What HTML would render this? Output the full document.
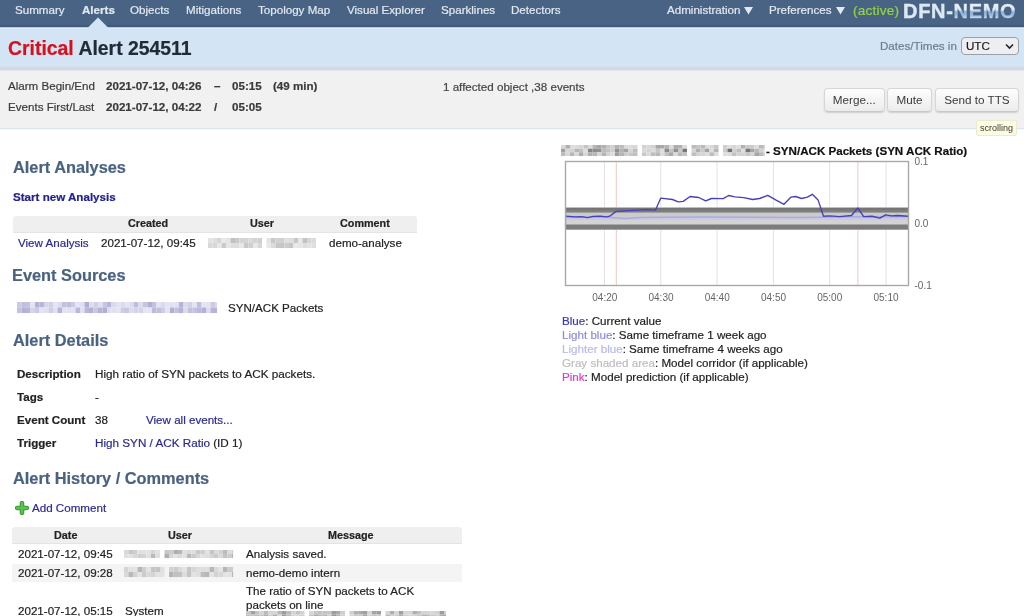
<!DOCTYPE html>
<html><head><meta charset="utf-8"><style>
html,body{margin:0;padding:0;width:1024px;height:616px;overflow:hidden;background:#fff;position:relative}
.t{position:absolute;white-space:nowrap;font-family:'Liberation Sans', sans-serif;will-change:transform;-webkit-text-stroke:0.2px currentColor}
.g{will-change:transform}
</style></head><body>
<div style="position:absolute;left:0px;top:0px;width:1024px;height:25px;background:#496385"></div>
<div style="position:absolute;left:0px;top:25px;width:1024px;height:2px;background:#425b7c"></div>
<div style="position:absolute;left:0px;top:27px;width:1024px;height:1px;background:#b8cce0"></div>
<div style="position:absolute;left:0px;top:28px;width:1024px;height:1px;background:#dbeafa"></div>
<div style="position:absolute;left:0px;top:29px;width:1024px;height:34px;background:#d3e4f4"></div>
<div style="position:absolute;left:0px;top:63px;width:1024px;height:3px;background:#d5e6f7"></div>
<div style="position:absolute;left:0px;top:66px;width:1024px;height:1px;background:#d4e1ee"></div>
<div style="position:absolute;left:0px;top:67px;width:1024px;height:3px;background:#d1d9e3"></div>
<div style="position:absolute;left:0px;top:70px;width:1024px;height:1px;background:#e4e7ea"></div>
<div style="position:absolute;left:0px;top:71px;width:1024px;height:57px;background:#f1f1f1"></div>
<div style="position:absolute;left:0px;top:128px;width:1024px;height:1px;background:#dce5ea"></div>
<div style="position:absolute;left:0px;top:129px;width:1024px;height:1px;background:#f2fbfc"></div>
<svg style="position:absolute;left:88px;top:17px" width="20" height="13"><polygon points="0,10.5 10,0.5 20,10.5 20,12 0,12" fill="#d3e4f4"/></svg>
<div class="t" style="left:15.4px;top:4.48px;font-size:11.6px;line-height:11.6px;color:#e3e9f1;font-weight:400;">Summary</div>
<div class="t" style="left:82.3px;top:4.48px;font-size:11.6px;line-height:11.6px;color:#e3e9f1;font-weight:700;">Alerts</div>
<div class="t" style="left:130.2px;top:4.48px;font-size:11.6px;line-height:11.6px;color:#e3e9f1;font-weight:400;">Objects</div>
<div class="t" style="left:185.8px;top:4.48px;font-size:11.6px;line-height:11.6px;color:#e3e9f1;font-weight:400;">Mitigations</div>
<div class="t" style="left:258.3px;top:4.48px;font-size:11.6px;line-height:11.6px;color:#e3e9f1;font-weight:400;">Topology Map</div>
<div class="t" style="left:347.2px;top:4.48px;font-size:11.6px;line-height:11.6px;color:#e3e9f1;font-weight:400;">Visual Explorer</div>
<div class="t" style="left:441px;top:4.48px;font-size:11.6px;line-height:11.6px;color:#e3e9f1;font-weight:400;">Sparklines</div>
<div class="t" style="left:510.9px;top:4.48px;font-size:11.6px;line-height:11.6px;color:#e3e9f1;font-weight:400;">Detectors</div>
<div class="t" style="left:666.6px;top:4.48px;font-size:11.6px;line-height:11.6px;color:#e3e9f1;font-weight:400;">Administration</div>
<div class="t" style="left:768.7px;top:4.48px;font-size:11.6px;line-height:11.6px;color:#e3e9f1;font-weight:400;">Preferences</div>
<svg style="position:absolute;left:744.3px;top:7px" width="9" height="8"><polygon points="0,0 9,0 4.5,7.5" fill="#e3e9f1"/></svg>
<svg style="position:absolute;left:836px;top:7px" width="9" height="8"><polygon points="0,0 9,0 4.5,7.5" fill="#e3e9f1"/></svg>
<div class="t" style="left:853.4px;top:3.79px;font-size:13.6px;line-height:13.6px;color:#95d63e;font-weight:400;letter-spacing:0.2px">(active)</div>
<div class="t" style="left:903px;top:1.27px;font-size:20px;line-height:20px;color:#dde8f5;font-weight:700;letter-spacing:0.7px;-webkit-text-stroke:0.4px currentColor">DFN-<span style="background:linear-gradient(#e8f0fa 0%,#e2ecf8 44%,#8eb1da 54%,#9dbde2 70%,#c4d8ee 82%);-webkit-background-clip:text;background-clip:text;color:transparent">NEMO</span></div>
<div class="t" style="left:8px;top:39.38px;font-size:19.4px;line-height:19.4px;color:#222a36;font-weight:700;"><span style="color:#d8101c">Critical</span> Alert 254511</div>
<div class="t" style="left:880px;top:39.98px;font-size:11.6px;line-height:11.6px;color:#6e7c8a;font-weight:400;">Dates/Times in</div>
<div style="position:absolute;left:961px;top:37px;width:58px;height:17.5px;box-sizing:border-box;border:1px solid #9aa0a8;border-radius:4px;background:#eeeef2"></div>
<div class="t" style="left:966px;top:40.18px;font-size:11.6px;line-height:11.6px;color:#1a1a1a;font-weight:400;">UTC</div>
<svg style="position:absolute;left:1005px;top:43px" width="9" height="7"><polyline points="1,1.5 4.5,5 8,1.5" fill="none" stroke="#222" stroke-width="1.6"/></svg>
<div class="t" style="left:7.8px;top:80.18px;font-size:11.6px;line-height:11.6px;color:#3a3a3a;font-weight:400;">Alarm Begin/End</div>
<div class="t" style="left:7.8px;top:101.18px;font-size:11.6px;line-height:11.6px;color:#3a3a3a;font-weight:400;">Events First/Last</div>
<div class="t" style="left:106px;top:80.18px;font-size:11.6px;line-height:11.6px;color:#3a3a3a;font-weight:700;">2021-07-12, 04:26</div>
<div class="t" style="left:213.5px;top:80.18px;font-size:11.6px;line-height:11.6px;color:#3a3a3a;font-weight:700;">–</div>
<div class="t" style="left:231.5px;top:80.18px;font-size:11.6px;line-height:11.6px;color:#3a3a3a;font-weight:700;">05:15</div>
<div class="t" style="left:273px;top:80.18px;font-size:11.6px;line-height:11.6px;color:#3a3a3a;font-weight:700;">(49 min)</div>
<div class="t" style="left:106px;top:101.18px;font-size:11.6px;line-height:11.6px;color:#3a3a3a;font-weight:700;">2021-07-12, 04:22</div>
<div class="t" style="left:213.5px;top:101.18px;font-size:11.6px;line-height:11.6px;color:#3a3a3a;font-weight:700;">/</div>
<div class="t" style="left:231.5px;top:101.18px;font-size:11.6px;line-height:11.6px;color:#3a3a3a;font-weight:700;">05:05</div>
<div class="t" style="left:443px;top:80.98px;font-size:11.6px;line-height:11.6px;color:#444;font-weight:400;">1 affected object ,38 events</div>
<div class="g" style="position:absolute;left:823.8px;top:88.3px;width:60.5px;height:24px;box-sizing:border-box;border:1px solid #d6d6d6;border-bottom-color:#c8c8c8;border-radius:4px;background:linear-gradient(#fdfdfd,#ececec);box-shadow:0 1px 1.5px rgba(0,0,0,0.14);font-family:'Liberation Sans', sans-serif;font-size:11.7px;line-height:21.5px;text-align:center;color:#3a3a3a">Merge...</div>
<div class="g" style="position:absolute;left:887.2px;top:88.3px;width:45.2px;height:24px;box-sizing:border-box;border:1px solid #d6d6d6;border-bottom-color:#c8c8c8;border-radius:4px;background:linear-gradient(#fdfdfd,#ececec);box-shadow:0 1px 1.5px rgba(0,0,0,0.14);font-family:'Liberation Sans', sans-serif;font-size:11.7px;line-height:21.5px;text-align:center;color:#3a3a3a">Mute</div>
<div class="g" style="position:absolute;left:935.3px;top:88.3px;width:83.8px;height:24px;box-sizing:border-box;border:1px solid #d6d6d6;border-bottom-color:#c8c8c8;border-radius:4px;background:linear-gradient(#fdfdfd,#ececec);box-shadow:0 1px 1.5px rgba(0,0,0,0.14);font-family:'Liberation Sans', sans-serif;font-size:11.7px;line-height:21.5px;text-align:center;color:#3a3a3a">Send to TTS</div>
<div class="g" style="position:absolute;left:975.5px;top:119.8px;width:41px;height:15.5px;box-sizing:border-box;border:1px solid #ebebd2;border-radius:2px;background:#fcfce4;font-family:'Liberation Sans', sans-serif;font-size:9px;line-height:14px;text-align:center;color:#38382e">scrolling</div>
<div class="t" style="left:12.5px;top:158.76px;font-size:16.35px;line-height:16.35px;color:#4a6282;font-weight:700;">Alert Analyses</div>
<div class="t" style="left:12.5px;top:191.18px;font-size:11.6px;line-height:11.6px;color:#22228c;font-weight:700;">Start new Analysis</div>
<div style="position:absolute;left:13px;top:216px;width:404px;height:15.5px;background:#efefef;border-radius:3px 3px 0 0;border-bottom:1px solid #e4e4e4"></div>
<div class="t" style="left:128.4px;top:218.06px;font-size:10.8px;line-height:10.8px;color:#222;font-weight:700;">Created</div>
<div class="t" style="left:250px;top:218.06px;font-size:10.8px;line-height:10.8px;color:#222;font-weight:700;">User</div>
<div class="t" style="left:340.3px;top:218.06px;font-size:10.8px;line-height:10.8px;color:#222;font-weight:700;">Comment</div>
<div class="t" style="left:18px;top:236.68px;font-size:11.6px;line-height:11.6px;color:#2a2a90;font-weight:400;">View Analysis</div>
<div class="t" style="left:101px;top:236.68px;font-size:11.6px;line-height:11.6px;color:#222;font-weight:400;">2021-07-12, 09:45</div>
<svg style="position:absolute;left:205px;top:235px" width="114" height="16"><g><rect x="3.0" y="3.0" width="4.5" height="5.05" fill="rgb(228,228,230)"/><rect x="3.0" y="8.0" width="4.5" height="5.05" fill="rgb(217,217,219)"/><rect x="7.5" y="3.0" width="4.5" height="5.05" fill="rgb(224,224,226)"/><rect x="7.5" y="8.0" width="4.5" height="5.05" fill="rgb(215,215,217)"/><rect x="12.0" y="3.0" width="4.5" height="5.05" fill="rgb(214,214,216)"/><rect x="12.0" y="8.0" width="4.5" height="5.05" fill="rgb(232,232,234)"/><rect x="16.5" y="3.0" width="4.5" height="5.05" fill="rgb(232,232,234)"/><rect x="16.5" y="8.0" width="4.5" height="5.05" fill="rgb(202,202,204)"/><rect x="21.0" y="3.0" width="4.5" height="5.05" fill="rgb(228,228,230)"/><rect x="21.0" y="8.0" width="4.5" height="5.05" fill="rgb(229,229,231)"/><rect x="25.5" y="3.0" width="4.5" height="5.05" fill="rgb(193,193,195)"/><rect x="25.5" y="8.0" width="4.5" height="5.05" fill="rgb(221,221,223)"/><rect x="30.0" y="3.0" width="4.5" height="5.05" fill="rgb(202,202,204)"/><rect x="30.0" y="8.0" width="4.5" height="5.05" fill="rgb(220,220,222)"/><rect x="34.5" y="3.0" width="4.5" height="5.05" fill="rgb(213,213,215)"/><rect x="34.5" y="8.0" width="4.5" height="5.05" fill="rgb(231,231,233)"/><rect x="39.0" y="3.0" width="4.5" height="5.05" fill="rgb(213,213,215)"/><rect x="39.0" y="8.0" width="4.5" height="5.05" fill="rgb(201,201,203)"/><rect x="43.5" y="3.0" width="4.5" height="5.05" fill="rgb(218,218,220)"/><rect x="43.5" y="8.0" width="4.5" height="5.05" fill="rgb(208,208,210)"/><rect x="48.0" y="3.0" width="4.5" height="5.05" fill="rgb(211,211,213)"/><rect x="48.0" y="8.0" width="4.5" height="5.05" fill="rgb(232,232,234)"/><rect x="52.5" y="3.0" width="4.5" height="5.05" fill="rgb(207,207,209)"/><rect x="52.5" y="8.0" width="4.5" height="5.05" fill="rgb(215,215,217)"/><rect x="61.5" y="3.0" width="4.5" height="5.05" fill="rgb(227,227,229)"/><rect x="61.5" y="8.0" width="4.5" height="5.05" fill="rgb(232,232,234)"/><rect x="66.0" y="3.0" width="4.5" height="5.05" fill="rgb(201,201,203)"/><rect x="66.0" y="8.0" width="4.5" height="5.05" fill="rgb(220,220,222)"/><rect x="70.5" y="3.0" width="4.5" height="5.05" fill="rgb(209,209,211)"/><rect x="70.5" y="8.0" width="4.5" height="5.05" fill="rgb(200,200,202)"/><rect x="75.0" y="3.0" width="4.5" height="5.05" fill="rgb(209,209,211)"/><rect x="75.0" y="8.0" width="4.5" height="5.05" fill="rgb(197,197,199)"/><rect x="79.5" y="3.0" width="4.5" height="5.05" fill="rgb(223,223,225)"/><rect x="79.5" y="8.0" width="4.5" height="5.05" fill="rgb(204,204,206)"/><rect x="84.0" y="3.0" width="4.5" height="5.05" fill="rgb(222,222,224)"/><rect x="84.0" y="8.0" width="4.5" height="5.05" fill="rgb(197,197,199)"/><rect x="88.5" y="3.0" width="4.5" height="5.05" fill="rgb(200,200,202)"/><rect x="88.5" y="8.0" width="4.5" height="5.05" fill="rgb(232,232,234)"/><rect x="93.0" y="3.0" width="4.5" height="5.05" fill="rgb(231,231,233)"/><rect x="93.0" y="8.0" width="4.5" height="5.05" fill="rgb(229,229,231)"/><rect x="97.5" y="3.0" width="4.5" height="5.05" fill="rgb(195,195,197)"/><rect x="97.5" y="8.0" width="4.5" height="5.05" fill="rgb(222,222,224)"/><rect x="102.0" y="3.0" width="4.5" height="5.05" fill="rgb(214,214,216)"/><rect x="102.0" y="8.0" width="4.5" height="5.05" fill="rgb(227,227,229)"/><rect x="106.5" y="3.0" width="4.5" height="5.05" fill="rgb(219,219,221)"/><rect x="106.5" y="8.0" width="4.5" height="5.05" fill="rgb(224,224,226)"/></g></svg>
<div class="t" style="left:328.8px;top:236.68px;font-size:11.6px;line-height:11.6px;color:#222;font-weight:400;">demo-analyse</div>
<div class="t" style="left:11.6px;top:266.76px;font-size:16.35px;line-height:16.35px;color:#4a6282;font-weight:700;">Event Sources</div>
<svg style="position:absolute;left:14px;top:299px" width="206" height="17"><g><rect x="3.0" y="3.0" width="4.5" height="5.55" fill="rgb(203,203,229)"/><rect x="3.0" y="8.5" width="4.5" height="5.55" fill="rgb(194,194,224)"/><rect x="7.5" y="3.0" width="4.5" height="5.55" fill="rgb(190,190,222)"/><rect x="7.5" y="8.5" width="4.5" height="5.55" fill="rgb(178,178,215)"/><rect x="12.0" y="3.0" width="4.5" height="5.55" fill="rgb(195,195,224)"/><rect x="12.0" y="8.5" width="4.5" height="5.55" fill="rgb(180,180,216)"/><rect x="16.5" y="3.0" width="4.5" height="5.55" fill="rgb(228,228,242)"/><rect x="16.5" y="8.5" width="4.5" height="5.55" fill="rgb(212,212,234)"/><rect x="21.0" y="3.0" width="4.5" height="5.55" fill="rgb(178,178,215)"/><rect x="21.0" y="8.5" width="4.5" height="5.55" fill="rgb(201,201,228)"/><rect x="25.5" y="3.0" width="4.5" height="5.55" fill="rgb(182,182,217)"/><rect x="25.5" y="8.5" width="4.5" height="5.55" fill="rgb(227,227,242)"/><rect x="30.0" y="3.0" width="4.5" height="5.55" fill="rgb(212,212,234)"/><rect x="30.0" y="8.5" width="4.5" height="5.55" fill="rgb(223,223,240)"/><rect x="34.5" y="3.0" width="4.5" height="5.55" fill="rgb(208,208,231)"/><rect x="34.5" y="8.5" width="4.5" height="5.55" fill="rgb(206,206,230)"/><rect x="39.0" y="3.0" width="4.5" height="5.55" fill="rgb(228,228,242)"/><rect x="39.0" y="8.5" width="4.5" height="5.55" fill="rgb(224,224,240)"/><rect x="43.5" y="3.0" width="4.5" height="5.55" fill="rgb(221,221,239)"/><rect x="43.5" y="8.5" width="4.5" height="5.55" fill="rgb(181,181,217)"/><rect x="48.0" y="3.0" width="4.5" height="5.55" fill="rgb(193,193,223)"/><rect x="48.0" y="8.5" width="4.5" height="5.55" fill="rgb(226,226,241)"/><rect x="52.5" y="3.0" width="4.5" height="5.55" fill="rgb(190,190,222)"/><rect x="52.5" y="8.5" width="4.5" height="5.55" fill="rgb(226,226,241)"/><rect x="57.0" y="3.0" width="4.5" height="5.55" fill="rgb(203,203,229)"/><rect x="57.0" y="8.5" width="4.5" height="5.55" fill="rgb(226,226,241)"/><rect x="61.5" y="3.0" width="4.5" height="5.55" fill="rgb(228,228,242)"/><rect x="61.5" y="8.5" width="4.5" height="5.55" fill="rgb(184,184,218)"/><rect x="66.0" y="3.0" width="4.5" height="5.55" fill="rgb(224,224,240)"/><rect x="66.0" y="8.5" width="4.5" height="5.55" fill="rgb(224,224,240)"/><rect x="70.5" y="3.0" width="4.5" height="5.55" fill="rgb(175,175,213)"/><rect x="70.5" y="8.5" width="4.5" height="5.55" fill="rgb(184,184,218)"/><rect x="75.0" y="3.0" width="4.5" height="5.55" fill="rgb(221,221,239)"/><rect x="75.0" y="8.5" width="4.5" height="5.55" fill="rgb(177,177,214)"/><rect x="79.5" y="3.0" width="4.5" height="5.55" fill="rgb(208,208,231)"/><rect x="79.5" y="8.5" width="4.5" height="5.55" fill="rgb(199,199,227)"/><rect x="84.0" y="3.0" width="4.5" height="5.55" fill="rgb(224,224,240)"/><rect x="84.0" y="8.5" width="4.5" height="5.55" fill="rgb(179,179,216)"/><rect x="88.5" y="3.0" width="4.5" height="5.55" fill="rgb(198,198,226)"/><rect x="88.5" y="8.5" width="4.5" height="5.55" fill="rgb(176,176,214)"/><rect x="93.0" y="3.0" width="4.5" height="5.55" fill="rgb(183,183,218)"/><rect x="93.0" y="8.5" width="4.5" height="5.55" fill="rgb(221,221,239)"/><rect x="97.5" y="3.0" width="4.5" height="5.55" fill="rgb(218,218,237)"/><rect x="97.5" y="8.5" width="4.5" height="5.55" fill="rgb(225,225,241)"/><rect x="102.0" y="3.0" width="4.5" height="5.55" fill="rgb(226,226,241)"/><rect x="102.0" y="8.5" width="4.5" height="5.55" fill="rgb(228,228,242)"/><rect x="106.5" y="3.0" width="4.5" height="5.55" fill="rgb(220,220,238)"/><rect x="106.5" y="8.5" width="4.5" height="5.55" fill="rgb(204,204,229)"/><rect x="111.0" y="3.0" width="4.5" height="5.55" fill="rgb(228,228,242)"/><rect x="111.0" y="8.5" width="4.5" height="5.55" fill="rgb(199,199,227)"/><rect x="115.5" y="3.0" width="4.5" height="5.55" fill="rgb(219,219,238)"/><rect x="115.5" y="8.5" width="4.5" height="5.55" fill="rgb(220,220,238)"/><rect x="120.0" y="3.0" width="4.5" height="5.55" fill="rgb(189,189,221)"/><rect x="120.0" y="8.5" width="4.5" height="5.55" fill="rgb(211,211,233)"/><rect x="124.5" y="3.0" width="4.5" height="5.55" fill="rgb(220,220,238)"/><rect x="124.5" y="8.5" width="4.5" height="5.55" fill="rgb(211,211,233)"/><rect x="129.0" y="3.0" width="4.5" height="5.55" fill="rgb(197,197,225)"/><rect x="129.0" y="8.5" width="4.5" height="5.55" fill="rgb(228,228,242)"/><rect x="133.5" y="3.0" width="4.5" height="5.55" fill="rgb(176,176,214)"/><rect x="133.5" y="8.5" width="4.5" height="5.55" fill="rgb(228,228,242)"/><rect x="138.0" y="3.0" width="4.5" height="5.55" fill="rgb(194,194,224)"/><rect x="138.0" y="8.5" width="4.5" height="5.55" fill="rgb(187,187,220)"/><rect x="142.5" y="3.0" width="4.5" height="5.55" fill="rgb(228,228,242)"/><rect x="142.5" y="8.5" width="4.5" height="5.55" fill="rgb(191,191,222)"/><rect x="147.0" y="3.0" width="4.5" height="5.55" fill="rgb(217,217,236)"/><rect x="147.0" y="8.5" width="4.5" height="5.55" fill="rgb(206,206,230)"/><rect x="151.5" y="3.0" width="4.5" height="5.55" fill="rgb(228,228,242)"/><rect x="151.5" y="8.5" width="4.5" height="5.55" fill="rgb(228,228,242)"/><rect x="156.0" y="3.0" width="4.5" height="5.55" fill="rgb(225,225,241)"/><rect x="156.0" y="8.5" width="4.5" height="5.55" fill="rgb(177,177,214)"/><rect x="160.5" y="3.0" width="4.5" height="5.55" fill="rgb(224,224,240)"/><rect x="160.5" y="8.5" width="4.5" height="5.55" fill="rgb(193,193,223)"/><rect x="165.0" y="3.0" width="4.5" height="5.55" fill="rgb(180,180,216)"/><rect x="165.0" y="8.5" width="4.5" height="5.55" fill="rgb(179,179,216)"/><rect x="169.5" y="3.0" width="4.5" height="5.55" fill="rgb(219,219,238)"/><rect x="169.5" y="8.5" width="4.5" height="5.55" fill="rgb(218,218,237)"/><rect x="174.0" y="3.0" width="4.5" height="5.55" fill="rgb(209,209,232)"/><rect x="174.0" y="8.5" width="4.5" height="5.55" fill="rgb(192,192,223)"/><rect x="178.5" y="3.0" width="4.5" height="5.55" fill="rgb(227,227,242)"/><rect x="178.5" y="8.5" width="4.5" height="5.55" fill="rgb(194,194,224)"/><rect x="183.0" y="3.0" width="4.5" height="5.55" fill="rgb(190,190,222)"/><rect x="183.0" y="8.5" width="4.5" height="5.55" fill="rgb(185,185,219)"/><rect x="187.5" y="3.0" width="4.5" height="5.55" fill="rgb(228,228,242)"/><rect x="187.5" y="8.5" width="4.5" height="5.55" fill="rgb(178,178,215)"/><rect x="192.0" y="3.0" width="4.5" height="5.55" fill="rgb(227,227,242)"/><rect x="192.0" y="8.5" width="4.5" height="5.55" fill="rgb(219,219,238)"/><rect x="196.5" y="3.0" width="4.5" height="5.55" fill="rgb(204,204,229)"/><rect x="196.5" y="8.5" width="4.5" height="5.55" fill="rgb(181,181,217)"/><rect x="201.0" y="3.0" width="2.0" height="5.55" fill="rgb(219,219,238)"/><rect x="201.0" y="8.5" width="2.0" height="5.55" fill="rgb(180,180,216)"/></g></svg>
<div class="t" style="left:228px;top:301.88px;font-size:11.6px;line-height:11.6px;color:#222;font-weight:400;">SYN/ACK Packets</div>
<div class="t" style="left:12.5px;top:332.16px;font-size:16.35px;line-height:16.35px;color:#4a6282;font-weight:700;">Alert Details</div>
<div class="t" style="left:17.2px;top:368.38px;font-size:11.6px;line-height:11.6px;color:#222;font-weight:700;">Description</div>
<div class="t" style="left:17.2px;top:391.48px;font-size:11.6px;line-height:11.6px;color:#222;font-weight:700;">Tags</div>
<div class="t" style="left:17.2px;top:414.48px;font-size:11.6px;line-height:11.6px;color:#222;font-weight:700;">Event Count</div>
<div class="t" style="left:17.2px;top:437.08px;font-size:11.6px;line-height:11.6px;color:#222;font-weight:700;">Trigger</div>
<div class="t" style="left:94.6px;top:368.30px;font-size:11.7px;line-height:11.7px;color:#222;font-weight:400;">High ratio of SYN packets to ACK packets.</div>
<div class="t" style="left:95px;top:391.48px;font-size:11.6px;line-height:11.6px;color:#222;font-weight:400;">-</div>
<div class="t" style="left:94.5px;top:414.48px;font-size:11.6px;line-height:11.6px;color:#222;font-weight:400;">38</div>
<div class="t" style="left:145.5px;top:414.48px;font-size:11.6px;line-height:11.6px;color:#2a2a90;font-weight:400;">View all events...</div>
<div class="t" style="left:94.6px;top:437.00px;font-size:11.7px;line-height:11.7px;color:#222;font-weight:400;"><span style="color:#2a2a90">High SYN / ACK Ratio</span> (ID 1)</div>
<div class="t" style="left:12.5px;top:470.16px;font-size:16.35px;line-height:16.35px;color:#4a6282;font-weight:700;">Alert History / Comments</div>
<svg style="position:absolute;left:15px;top:501px" width="14" height="14"><g stroke-linecap="round"><path d="M7,2.2V11.8M2.2,7H11.8" stroke="#3a9a34" stroke-width="4.6"/><path d="M7,2.2V11.8M2.2,7H11.8" stroke="#5cc052" stroke-width="2.6"/></g></svg>
<div class="t" style="left:31.7px;top:502.18px;font-size:11.6px;line-height:11.6px;color:#2a2a90;font-weight:400;">Add Comment</div>
<div style="position:absolute;left:12px;top:527px;width:450px;height:16.3px;background:#efefef;border-radius:3px 3px 0 0;border-bottom:1px solid #e4e4e4"></div>
<div class="t" style="left:53.6px;top:529.86px;font-size:10.8px;line-height:10.8px;color:#222;font-weight:700;">Date</div>
<div class="t" style="left:167.5px;top:529.86px;font-size:10.8px;line-height:10.8px;color:#222;font-weight:700;">User</div>
<div class="t" style="left:327.8px;top:529.86px;font-size:10.8px;line-height:10.8px;color:#222;font-weight:700;">Message</div>
<div class="t" style="left:18px;top:547.98px;font-size:11.6px;line-height:11.6px;color:#222;font-weight:400;">2021-07-12, 09:45</div>
<svg style="position:absolute;left:121px;top:547px" width="115" height="14"><g><rect x="3.0" y="3.0" width="4.5" height="4.05" fill="rgb(217,217,217)"/><rect x="3.0" y="7.0" width="4.5" height="4.05" fill="rgb(224,224,224)"/><rect x="7.5" y="3.0" width="4.5" height="4.05" fill="rgb(199,199,199)"/><rect x="7.5" y="7.0" width="4.5" height="4.05" fill="rgb(226,226,226)"/><rect x="12.0" y="3.0" width="4.5" height="4.05" fill="rgb(206,206,206)"/><rect x="12.0" y="7.0" width="4.5" height="4.05" fill="rgb(216,216,216)"/><rect x="16.5" y="3.0" width="4.5" height="4.05" fill="rgb(226,226,226)"/><rect x="16.5" y="7.0" width="4.5" height="4.05" fill="rgb(208,208,208)"/><rect x="21.0" y="3.0" width="4.5" height="4.05" fill="rgb(226,226,226)"/><rect x="21.0" y="7.0" width="4.5" height="4.05" fill="rgb(212,212,212)"/><rect x="25.5" y="3.0" width="4.5" height="4.05" fill="rgb(226,226,226)"/><rect x="25.5" y="7.0" width="4.5" height="4.05" fill="rgb(225,225,225)"/><rect x="30.0" y="3.0" width="4.5" height="4.05" fill="rgb(213,213,213)"/><rect x="30.0" y="7.0" width="4.5" height="4.05" fill="rgb(186,186,186)"/><rect x="34.5" y="3.0" width="4.5" height="4.05" fill="rgb(225,225,225)"/><rect x="34.5" y="7.0" width="4.5" height="4.05" fill="rgb(222,222,222)"/><rect x="43.5" y="3.0" width="4.5" height="4.05" fill="rgb(200,200,200)"/><rect x="43.5" y="7.0" width="4.5" height="4.05" fill="rgb(176,176,176)"/><rect x="48.0" y="3.0" width="4.5" height="4.05" fill="rgb(204,204,204)"/><rect x="48.0" y="7.0" width="4.5" height="4.05" fill="rgb(214,214,214)"/><rect x="52.5" y="3.0" width="4.5" height="4.05" fill="rgb(174,174,174)"/><rect x="52.5" y="7.0" width="4.5" height="4.05" fill="rgb(226,226,226)"/><rect x="57.0" y="3.0" width="4.5" height="4.05" fill="rgb(183,183,183)"/><rect x="57.0" y="7.0" width="4.5" height="4.05" fill="rgb(219,219,219)"/><rect x="61.5" y="3.0" width="4.5" height="4.05" fill="rgb(224,224,224)"/><rect x="61.5" y="7.0" width="4.5" height="4.05" fill="rgb(225,225,225)"/><rect x="66.0" y="3.0" width="4.5" height="4.05" fill="rgb(218,218,218)"/><rect x="66.0" y="7.0" width="4.5" height="4.05" fill="rgb(187,187,187)"/><rect x="70.5" y="3.0" width="4.5" height="4.05" fill="rgb(223,223,223)"/><rect x="70.5" y="7.0" width="4.5" height="4.05" fill="rgb(203,203,203)"/><rect x="75.0" y="3.0" width="4.5" height="4.05" fill="rgb(200,200,200)"/><rect x="75.0" y="7.0" width="4.5" height="4.05" fill="rgb(215,215,215)"/><rect x="79.5" y="3.0" width="4.5" height="4.05" fill="rgb(206,206,206)"/><rect x="79.5" y="7.0" width="4.5" height="4.05" fill="rgb(226,226,226)"/><rect x="84.0" y="3.0" width="4.5" height="4.05" fill="rgb(226,226,226)"/><rect x="84.0" y="7.0" width="4.5" height="4.05" fill="rgb(222,222,222)"/><rect x="88.5" y="3.0" width="4.5" height="4.05" fill="rgb(197,197,197)"/><rect x="88.5" y="7.0" width="4.5" height="4.05" fill="rgb(212,212,212)"/><rect x="93.0" y="3.0" width="4.5" height="4.05" fill="rgb(218,218,218)"/><rect x="93.0" y="7.0" width="4.5" height="4.05" fill="rgb(203,203,203)"/><rect x="97.5" y="3.0" width="4.5" height="4.05" fill="rgb(211,211,211)"/><rect x="97.5" y="7.0" width="4.5" height="4.05" fill="rgb(218,218,218)"/><rect x="102.0" y="3.0" width="4.5" height="4.05" fill="rgb(188,188,188)"/><rect x="102.0" y="7.0" width="4.5" height="4.05" fill="rgb(195,195,195)"/><rect x="106.5" y="3.0" width="4.5" height="4.05" fill="rgb(221,221,221)"/><rect x="106.5" y="7.0" width="4.5" height="4.05" fill="rgb(204,204,204)"/><rect x="111.0" y="3.0" width="1.1" height="4.05" fill="rgb(207,207,207)"/><rect x="111.0" y="7.0" width="1.1" height="4.05" fill="rgb(182,182,182)"/></g></svg>
<div class="t" style="left:245.5px;top:548.18px;font-size:11.6px;line-height:11.6px;color:#222;font-weight:400;">Analysis saved.</div>
<div style="position:absolute;left:12px;top:563.6px;width:450px;height:18px;background:#f4f4f4"></div>
<div class="t" style="left:18px;top:567.08px;font-size:11.6px;line-height:11.6px;color:#222;font-weight:400;">2021-07-12, 09:28</div>
<svg style="position:absolute;left:121px;top:564px" width="115" height="16"><g><rect x="3.0" y="3.0" width="4.5" height="5.05" fill="rgb(212,212,212)"/><rect x="3.0" y="8.0" width="4.5" height="5.05" fill="rgb(217,217,217)"/><rect x="7.5" y="3.0" width="4.5" height="5.05" fill="rgb(226,226,226)"/><rect x="7.5" y="8.0" width="4.5" height="5.05" fill="rgb(185,185,185)"/><rect x="12.0" y="3.0" width="4.5" height="5.05" fill="rgb(228,228,228)"/><rect x="12.0" y="8.0" width="4.5" height="5.05" fill="rgb(210,210,210)"/><rect x="16.5" y="3.0" width="4.5" height="5.05" fill="rgb(182,182,182)"/><rect x="16.5" y="8.0" width="4.5" height="5.05" fill="rgb(228,228,228)"/><rect x="21.0" y="3.0" width="4.5" height="5.05" fill="rgb(207,207,207)"/><rect x="21.0" y="8.0" width="4.5" height="5.05" fill="rgb(203,203,203)"/><rect x="25.5" y="3.0" width="4.5" height="5.05" fill="rgb(228,228,228)"/><rect x="25.5" y="8.0" width="4.5" height="5.05" fill="rgb(217,217,217)"/><rect x="30.0" y="3.0" width="4.5" height="5.05" fill="rgb(197,197,197)"/><rect x="30.0" y="8.0" width="4.5" height="5.05" fill="rgb(213,213,213)"/><rect x="34.5" y="3.0" width="4.5" height="5.05" fill="rgb(196,196,196)"/><rect x="34.5" y="8.0" width="4.5" height="5.05" fill="rgb(226,226,226)"/><rect x="39.0" y="3.0" width="4.5" height="5.05" fill="rgb(223,223,223)"/><rect x="39.0" y="8.0" width="4.5" height="5.05" fill="rgb(227,227,227)"/><rect x="48.0" y="3.0" width="4.5" height="5.05" fill="rgb(210,210,210)"/><rect x="48.0" y="8.0" width="4.5" height="5.05" fill="rgb(180,180,180)"/><rect x="52.5" y="3.0" width="4.5" height="5.05" fill="rgb(205,205,205)"/><rect x="52.5" y="8.0" width="4.5" height="5.05" fill="rgb(192,192,192)"/><rect x="57.0" y="3.0" width="4.5" height="5.05" fill="rgb(217,217,217)"/><rect x="57.0" y="8.0" width="4.5" height="5.05" fill="rgb(194,194,194)"/><rect x="61.5" y="3.0" width="4.5" height="5.05" fill="rgb(227,227,227)"/><rect x="61.5" y="8.0" width="4.5" height="5.05" fill="rgb(221,221,221)"/><rect x="66.0" y="3.0" width="4.5" height="5.05" fill="rgb(199,199,199)"/><rect x="66.0" y="8.0" width="4.5" height="5.05" fill="rgb(196,196,196)"/><rect x="70.5" y="3.0" width="4.5" height="5.05" fill="rgb(215,215,215)"/><rect x="70.5" y="8.0" width="4.5" height="5.05" fill="rgb(227,227,227)"/><rect x="75.0" y="3.0" width="4.5" height="5.05" fill="rgb(222,222,222)"/><rect x="75.0" y="8.0" width="4.5" height="5.05" fill="rgb(224,224,224)"/><rect x="79.5" y="3.0" width="4.5" height="5.05" fill="rgb(221,221,221)"/><rect x="79.5" y="8.0" width="4.5" height="5.05" fill="rgb(189,189,189)"/><rect x="84.0" y="3.0" width="4.5" height="5.05" fill="rgb(224,224,224)"/><rect x="84.0" y="8.0" width="4.5" height="5.05" fill="rgb(183,183,183)"/><rect x="88.5" y="3.0" width="4.5" height="5.05" fill="rgb(184,184,184)"/><rect x="88.5" y="8.0" width="4.5" height="5.05" fill="rgb(228,228,228)"/><rect x="93.0" y="3.0" width="4.5" height="5.05" fill="rgb(217,217,217)"/><rect x="93.0" y="8.0" width="4.5" height="5.05" fill="rgb(211,211,211)"/><rect x="97.5" y="3.0" width="4.5" height="5.05" fill="rgb(228,228,228)"/><rect x="97.5" y="8.0" width="4.5" height="5.05" fill="rgb(215,215,215)"/><rect x="102.0" y="3.0" width="4.5" height="5.05" fill="rgb(182,182,182)"/><rect x="102.0" y="8.0" width="4.5" height="5.05" fill="rgb(227,227,227)"/><rect x="106.5" y="3.0" width="4.5" height="5.05" fill="rgb(204,204,204)"/><rect x="106.5" y="8.0" width="4.5" height="5.05" fill="rgb(227,227,227)"/><rect x="111.0" y="3.0" width="1.1" height="5.05" fill="rgb(206,206,206)"/><rect x="111.0" y="8.0" width="1.1" height="5.05" fill="rgb(182,182,182)"/></g></svg>
<div class="t" style="left:245.5px;top:567.18px;font-size:11.6px;line-height:11.6px;color:#222;font-weight:400;">nemo-demo intern</div>
<div class="t" style="left:245.5px;top:584.68px;font-size:11.6px;line-height:11.6px;color:#222;font-weight:400;">The ratio of SYN packets to ACK</div>
<div class="t" style="left:245.5px;top:598.78px;font-size:11.6px;line-height:11.6px;color:#222;font-weight:400;">packets on line</div>
<div class="t" style="left:18px;top:605.38px;font-size:11.6px;line-height:11.6px;color:#222;font-weight:400;">2021-07-12, 05:15</div>
<div class="t" style="left:124.5px;top:605.38px;font-size:11.6px;line-height:11.6px;color:#222;font-weight:400;">System</div>
<svg style="position:absolute;left:243px;top:608px" width="206" height="13"><g><rect x="3.0" y="3.0" width="4.5" height="3.55" fill="rgb(199,199,199)"/><rect x="3.0" y="6.5" width="4.5" height="3.55" fill="rgb(192,192,192)"/><rect x="7.5" y="3.0" width="4.5" height="3.55" fill="rgb(163,163,163)"/><rect x="7.5" y="6.5" width="4.5" height="3.55" fill="rgb(198,198,198)"/><rect x="12.0" y="3.0" width="4.5" height="3.55" fill="rgb(195,195,195)"/><rect x="12.0" y="6.5" width="4.5" height="3.55" fill="rgb(190,190,190)"/><rect x="16.5" y="3.0" width="4.5" height="3.55" fill="rgb(211,211,211)"/><rect x="16.5" y="6.5" width="4.5" height="3.55" fill="rgb(195,195,195)"/><rect x="21.0" y="3.0" width="4.5" height="3.55" fill="rgb(187,187,187)"/><rect x="21.0" y="6.5" width="4.5" height="3.55" fill="rgb(174,174,174)"/><rect x="25.5" y="3.0" width="4.5" height="3.55" fill="rgb(214,214,214)"/><rect x="25.5" y="6.5" width="4.5" height="3.55" fill="rgb(207,207,207)"/><rect x="30.0" y="3.0" width="4.5" height="3.55" fill="rgb(214,214,214)"/><rect x="30.0" y="6.5" width="4.5" height="3.55" fill="rgb(173,173,173)"/><rect x="34.5" y="3.0" width="4.5" height="3.55" fill="rgb(182,182,182)"/><rect x="34.5" y="6.5" width="4.5" height="3.55" fill="rgb(215,215,215)"/><rect x="39.0" y="3.0" width="4.5" height="3.55" fill="rgb(157,157,157)"/><rect x="39.0" y="6.5" width="4.5" height="3.55" fill="rgb(159,159,159)"/><rect x="43.5" y="3.0" width="4.5" height="3.55" fill="rgb(185,185,185)"/><rect x="43.5" y="6.5" width="4.5" height="3.55" fill="rgb(188,188,188)"/><rect x="48.0" y="3.0" width="4.5" height="3.55" fill="rgb(212,212,212)"/><rect x="48.0" y="6.5" width="4.5" height="3.55" fill="rgb(215,215,215)"/><rect x="52.5" y="3.0" width="4.5" height="3.55" fill="rgb(194,194,194)"/><rect x="52.5" y="6.5" width="4.5" height="3.55" fill="rgb(215,215,215)"/><rect x="57.0" y="3.0" width="4.5" height="3.55" fill="rgb(211,211,211)"/><rect x="57.0" y="6.5" width="4.5" height="3.55" fill="rgb(209,209,209)"/><rect x="66.0" y="3.0" width="4.5" height="3.55" fill="rgb(215,215,215)"/><rect x="66.0" y="6.5" width="4.5" height="3.55" fill="rgb(198,198,198)"/><rect x="70.5" y="3.0" width="4.5" height="3.55" fill="rgb(199,199,199)"/><rect x="70.5" y="6.5" width="4.5" height="3.55" fill="rgb(170,170,170)"/><rect x="75.0" y="3.0" width="4.5" height="3.55" fill="rgb(194,194,194)"/><rect x="75.0" y="6.5" width="4.5" height="3.55" fill="rgb(186,186,186)"/><rect x="79.5" y="3.0" width="4.5" height="3.55" fill="rgb(196,196,196)"/><rect x="79.5" y="6.5" width="4.5" height="3.55" fill="rgb(184,184,184)"/><rect x="84.0" y="3.0" width="4.5" height="3.55" fill="rgb(198,198,198)"/><rect x="84.0" y="6.5" width="4.5" height="3.55" fill="rgb(208,208,208)"/><rect x="88.5" y="3.0" width="4.5" height="3.55" fill="rgb(156,156,156)"/><rect x="88.5" y="6.5" width="4.5" height="3.55" fill="rgb(156,156,156)"/><rect x="93.0" y="3.0" width="4.5" height="3.55" fill="rgb(170,170,170)"/><rect x="93.0" y="6.5" width="4.5" height="3.55" fill="rgb(181,181,181)"/><rect x="97.5" y="3.0" width="4.5" height="3.55" fill="rgb(206,206,206)"/><rect x="97.5" y="6.5" width="4.5" height="3.55" fill="rgb(210,210,210)"/><rect x="106.5" y="3.0" width="4.5" height="3.55" fill="rgb(207,207,207)"/><rect x="106.5" y="6.5" width="4.5" height="3.55" fill="rgb(215,215,215)"/><rect x="111.0" y="3.0" width="4.5" height="3.55" fill="rgb(176,176,176)"/><rect x="111.0" y="6.5" width="4.5" height="3.55" fill="rgb(202,202,202)"/><rect x="115.5" y="3.0" width="4.5" height="3.55" fill="rgb(170,170,170)"/><rect x="115.5" y="6.5" width="4.5" height="3.55" fill="rgb(202,202,202)"/><rect x="120.0" y="3.0" width="4.5" height="3.55" fill="rgb(159,159,159)"/><rect x="120.0" y="6.5" width="4.5" height="3.55" fill="rgb(169,169,169)"/><rect x="124.5" y="3.0" width="4.5" height="3.55" fill="rgb(215,215,215)"/><rect x="124.5" y="6.5" width="4.5" height="3.55" fill="rgb(211,211,211)"/><rect x="129.0" y="3.0" width="4.5" height="3.55" fill="rgb(164,164,164)"/><rect x="129.0" y="6.5" width="4.5" height="3.55" fill="rgb(198,198,198)"/><rect x="133.5" y="3.0" width="4.5" height="3.55" fill="rgb(157,157,157)"/><rect x="133.5" y="6.5" width="4.5" height="3.55" fill="rgb(202,202,202)"/><rect x="142.5" y="3.0" width="4.5" height="3.55" fill="rgb(215,215,215)"/><rect x="142.5" y="6.5" width="4.5" height="3.55" fill="rgb(187,187,187)"/><rect x="147.0" y="3.0" width="4.5" height="3.55" fill="rgb(175,175,175)"/><rect x="147.0" y="6.5" width="4.5" height="3.55" fill="rgb(208,208,208)"/><rect x="151.5" y="3.0" width="4.5" height="3.55" fill="rgb(214,214,214)"/><rect x="151.5" y="6.5" width="4.5" height="3.55" fill="rgb(205,205,205)"/><rect x="156.0" y="3.0" width="4.5" height="3.55" fill="rgb(159,159,159)"/><rect x="156.0" y="6.5" width="4.5" height="3.55" fill="rgb(177,177,177)"/><rect x="160.5" y="3.0" width="4.5" height="3.55" fill="rgb(214,214,214)"/><rect x="160.5" y="6.5" width="4.5" height="3.55" fill="rgb(209,209,209)"/><rect x="165.0" y="3.0" width="4.5" height="3.55" fill="rgb(214,214,214)"/><rect x="165.0" y="6.5" width="4.5" height="3.55" fill="rgb(215,215,215)"/><rect x="169.5" y="3.0" width="4.5" height="3.55" fill="rgb(174,174,174)"/><rect x="169.5" y="6.5" width="4.5" height="3.55" fill="rgb(212,212,212)"/><rect x="174.0" y="3.0" width="4.5" height="3.55" fill="rgb(192,192,192)"/><rect x="174.0" y="6.5" width="4.5" height="3.55" fill="rgb(199,199,199)"/><rect x="178.5" y="3.0" width="4.5" height="3.55" fill="rgb(211,211,211)"/><rect x="178.5" y="6.5" width="4.5" height="3.55" fill="rgb(179,179,179)"/><rect x="183.0" y="3.0" width="4.5" height="3.55" fill="rgb(213,213,213)"/><rect x="183.0" y="6.5" width="4.5" height="3.55" fill="rgb(186,186,186)"/><rect x="187.5" y="3.0" width="4.5" height="3.55" fill="rgb(214,214,214)"/><rect x="187.5" y="6.5" width="4.5" height="3.55" fill="rgb(200,200,200)"/><rect x="192.0" y="3.0" width="4.5" height="3.55" fill="rgb(210,210,210)"/><rect x="192.0" y="6.5" width="4.5" height="3.55" fill="rgb(208,208,208)"/><rect x="196.5" y="3.0" width="4.5" height="3.55" fill="rgb(158,158,158)"/><rect x="196.5" y="6.5" width="4.5" height="3.55" fill="rgb(173,173,173)"/><rect x="201.0" y="3.0" width="2.0" height="3.55" fill="rgb(207,207,207)"/><rect x="201.0" y="6.5" width="2.0" height="3.55" fill="rgb(166,166,166)"/></g></svg>
<svg style="position:absolute;left:557.5px;top:141.8px" width="209.5" height="17.0"><g><rect x="3.0" y="3.0" width="4.5" height="3.72" fill="rgb(216,216,216)"/><rect x="3.0" y="6.7" width="4.5" height="3.72" fill="rgb(162,162,162)"/><rect x="3.0" y="10.3" width="4.5" height="3.72" fill="rgb(187,187,187)"/><rect x="7.5" y="3.0" width="4.5" height="3.72" fill="rgb(176,176,176)"/><rect x="7.5" y="6.7" width="4.5" height="3.72" fill="rgb(215,215,215)"/><rect x="7.5" y="10.3" width="4.5" height="3.72" fill="rgb(216,216,216)"/><rect x="12.0" y="3.0" width="4.5" height="3.72" fill="rgb(220,220,220)"/><rect x="12.0" y="6.7" width="4.5" height="3.72" fill="rgb(212,212,212)"/><rect x="12.0" y="10.3" width="4.5" height="3.72" fill="rgb(182,182,182)"/><rect x="16.5" y="3.0" width="4.5" height="3.72" fill="rgb(220,220,220)"/><rect x="16.5" y="6.7" width="4.5" height="3.72" fill="rgb(183,183,183)"/><rect x="16.5" y="10.3" width="4.5" height="3.72" fill="rgb(217,217,217)"/><rect x="21.0" y="3.0" width="4.5" height="3.72" fill="rgb(214,214,214)"/><rect x="21.0" y="6.7" width="4.5" height="3.72" fill="rgb(194,194,194)"/><rect x="21.0" y="10.3" width="4.5" height="3.72" fill="rgb(173,173,173)"/><rect x="25.5" y="3.0" width="4.5" height="3.72" fill="rgb(196,196,196)"/><rect x="25.5" y="6.7" width="4.5" height="3.72" fill="rgb(222,222,222)"/><rect x="25.5" y="10.3" width="4.5" height="3.72" fill="rgb(214,214,214)"/><rect x="30.0" y="3.0" width="4.5" height="3.72" fill="rgb(220,220,220)"/><rect x="30.0" y="6.7" width="4.5" height="3.72" fill="rgb(134,134,134)"/><rect x="30.0" y="10.3" width="4.5" height="3.72" fill="rgb(176,176,176)"/><rect x="34.5" y="3.0" width="4.5" height="3.72" fill="rgb(180,180,180)"/><rect x="34.5" y="6.7" width="4.5" height="3.72" fill="rgb(141,141,141)"/><rect x="34.5" y="10.3" width="4.5" height="3.72" fill="rgb(182,182,182)"/><rect x="39.0" y="3.0" width="4.5" height="3.72" fill="rgb(167,167,167)"/><rect x="39.0" y="6.7" width="4.5" height="3.72" fill="rgb(146,146,146)"/><rect x="39.0" y="10.3" width="4.5" height="3.72" fill="rgb(215,215,215)"/><rect x="43.5" y="3.0" width="4.5" height="3.72" fill="rgb(176,176,176)"/><rect x="43.5" y="6.7" width="4.5" height="3.72" fill="rgb(188,188,188)"/><rect x="43.5" y="10.3" width="4.5" height="3.72" fill="rgb(180,180,180)"/><rect x="48.0" y="3.0" width="4.5" height="3.72" fill="rgb(198,198,198)"/><rect x="48.0" y="6.7" width="4.5" height="3.72" fill="rgb(194,194,194)"/><rect x="48.0" y="10.3" width="4.5" height="3.72" fill="rgb(210,210,210)"/><rect x="52.5" y="3.0" width="4.5" height="3.72" fill="rgb(207,207,207)"/><rect x="52.5" y="6.7" width="4.5" height="3.72" fill="rgb(205,205,205)"/><rect x="52.5" y="10.3" width="4.5" height="3.72" fill="rgb(221,221,221)"/><rect x="57.0" y="3.0" width="4.5" height="3.72" fill="rgb(178,178,178)"/><rect x="57.0" y="6.7" width="4.5" height="3.72" fill="rgb(146,146,146)"/><rect x="57.0" y="10.3" width="4.5" height="3.72" fill="rgb(158,158,158)"/><rect x="61.5" y="3.0" width="4.5" height="3.72" fill="rgb(189,189,189)"/><rect x="61.5" y="6.7" width="4.5" height="3.72" fill="rgb(180,180,180)"/><rect x="61.5" y="10.3" width="4.5" height="3.72" fill="rgb(181,181,181)"/><rect x="66.0" y="3.0" width="4.5" height="3.72" fill="rgb(220,220,220)"/><rect x="66.0" y="6.7" width="4.5" height="3.72" fill="rgb(164,164,164)"/><rect x="66.0" y="10.3" width="4.5" height="3.72" fill="rgb(205,205,205)"/><rect x="70.5" y="3.0" width="4.5" height="3.72" fill="rgb(219,219,219)"/><rect x="70.5" y="6.7" width="4.5" height="3.72" fill="rgb(214,214,214)"/><rect x="70.5" y="10.3" width="4.5" height="3.72" fill="rgb(200,200,200)"/><rect x="75.0" y="3.0" width="4.5" height="3.72" fill="rgb(216,216,216)"/><rect x="75.0" y="6.7" width="4.5" height="3.72" fill="rgb(191,191,191)"/><rect x="75.0" y="10.3" width="4.5" height="3.72" fill="rgb(193,193,193)"/><rect x="84.0" y="3.0" width="4.5" height="3.72" fill="rgb(209,209,209)"/><rect x="84.0" y="6.7" width="4.5" height="3.72" fill="rgb(218,218,218)"/><rect x="84.0" y="10.3" width="4.5" height="3.72" fill="rgb(201,201,201)"/><rect x="88.5" y="3.0" width="4.5" height="3.72" fill="rgb(217,217,217)"/><rect x="88.5" y="6.7" width="4.5" height="3.72" fill="rgb(212,212,212)"/><rect x="88.5" y="10.3" width="4.5" height="3.72" fill="rgb(218,218,218)"/><rect x="93.0" y="3.0" width="4.5" height="3.72" fill="rgb(210,210,210)"/><rect x="93.0" y="6.7" width="4.5" height="3.72" fill="rgb(221,221,221)"/><rect x="93.0" y="10.3" width="4.5" height="3.72" fill="rgb(189,189,189)"/><rect x="97.5" y="3.0" width="4.5" height="3.72" fill="rgb(167,167,167)"/><rect x="97.5" y="6.7" width="4.5" height="3.72" fill="rgb(198,198,198)"/><rect x="97.5" y="10.3" width="4.5" height="3.72" fill="rgb(184,184,184)"/><rect x="102.0" y="3.0" width="4.5" height="3.72" fill="rgb(169,169,169)"/><rect x="102.0" y="6.7" width="4.5" height="3.72" fill="rgb(222,222,222)"/><rect x="102.0" y="10.3" width="4.5" height="3.72" fill="rgb(220,220,220)"/><rect x="106.5" y="3.0" width="4.5" height="3.72" fill="rgb(180,180,180)"/><rect x="106.5" y="6.7" width="4.5" height="3.72" fill="rgb(140,140,140)"/><rect x="106.5" y="10.3" width="4.5" height="3.72" fill="rgb(191,191,191)"/><rect x="111.0" y="3.0" width="4.5" height="3.72" fill="rgb(220,220,220)"/><rect x="111.0" y="6.7" width="4.5" height="3.72" fill="rgb(196,196,196)"/><rect x="111.0" y="10.3" width="4.5" height="3.72" fill="rgb(170,170,170)"/><rect x="115.5" y="3.0" width="4.5" height="3.72" fill="rgb(173,173,173)"/><rect x="115.5" y="6.7" width="4.5" height="3.72" fill="rgb(145,145,145)"/><rect x="115.5" y="10.3" width="4.5" height="3.72" fill="rgb(218,218,218)"/><rect x="120.0" y="3.0" width="4.5" height="3.72" fill="rgb(176,176,176)"/><rect x="120.0" y="6.7" width="4.5" height="3.72" fill="rgb(200,200,200)"/><rect x="120.0" y="10.3" width="4.5" height="3.72" fill="rgb(184,184,184)"/><rect x="124.5" y="3.0" width="4.5" height="3.72" fill="rgb(220,220,220)"/><rect x="124.5" y="6.7" width="4.5" height="3.72" fill="rgb(118,118,118)"/><rect x="124.5" y="10.3" width="4.5" height="3.72" fill="rgb(193,193,193)"/><rect x="133.5" y="3.0" width="4.5" height="3.72" fill="rgb(187,187,187)"/><rect x="133.5" y="6.7" width="4.5" height="3.72" fill="rgb(213,213,213)"/><rect x="133.5" y="10.3" width="4.5" height="3.72" fill="rgb(192,192,192)"/><rect x="138.0" y="3.0" width="4.5" height="3.72" fill="rgb(197,197,197)"/><rect x="138.0" y="6.7" width="4.5" height="3.72" fill="rgb(175,175,175)"/><rect x="138.0" y="10.3" width="4.5" height="3.72" fill="rgb(210,210,210)"/><rect x="142.5" y="3.0" width="4.5" height="3.72" fill="rgb(186,186,186)"/><rect x="142.5" y="6.7" width="4.5" height="3.72" fill="rgb(203,203,203)"/><rect x="142.5" y="10.3" width="4.5" height="3.72" fill="rgb(213,213,213)"/><rect x="147.0" y="3.0" width="4.5" height="3.72" fill="rgb(219,219,219)"/><rect x="147.0" y="6.7" width="4.5" height="3.72" fill="rgb(163,163,163)"/><rect x="147.0" y="10.3" width="4.5" height="3.72" fill="rgb(221,221,221)"/><rect x="151.5" y="3.0" width="4.5" height="3.72" fill="rgb(217,217,217)"/><rect x="151.5" y="6.7" width="4.5" height="3.72" fill="rgb(221,221,221)"/><rect x="151.5" y="10.3" width="4.5" height="3.72" fill="rgb(190,190,190)"/><rect x="156.0" y="3.0" width="4.5" height="3.72" fill="rgb(199,199,199)"/><rect x="156.0" y="6.7" width="4.5" height="3.72" fill="rgb(181,181,181)"/><rect x="156.0" y="10.3" width="4.5" height="3.72" fill="rgb(222,222,222)"/><rect x="165.0" y="3.0" width="4.5" height="3.72" fill="rgb(207,207,207)"/><rect x="165.0" y="6.7" width="4.5" height="3.72" fill="rgb(203,203,203)"/><rect x="165.0" y="10.3" width="4.5" height="3.72" fill="rgb(221,221,221)"/><rect x="169.5" y="3.0" width="4.5" height="3.72" fill="rgb(222,222,222)"/><rect x="169.5" y="6.7" width="4.5" height="3.72" fill="rgb(113,113,113)"/><rect x="169.5" y="10.3" width="4.5" height="3.72" fill="rgb(221,221,221)"/><rect x="174.0" y="3.0" width="4.5" height="3.72" fill="rgb(214,214,214)"/><rect x="174.0" y="6.7" width="4.5" height="3.72" fill="rgb(209,209,209)"/><rect x="174.0" y="10.3" width="4.5" height="3.72" fill="rgb(194,194,194)"/><rect x="178.5" y="3.0" width="4.5" height="3.72" fill="rgb(222,222,222)"/><rect x="178.5" y="6.7" width="4.5" height="3.72" fill="rgb(190,190,190)"/><rect x="178.5" y="10.3" width="4.5" height="3.72" fill="rgb(209,209,209)"/><rect x="183.0" y="3.0" width="4.5" height="3.72" fill="rgb(177,177,177)"/><rect x="183.0" y="6.7" width="4.5" height="3.72" fill="rgb(222,222,222)"/><rect x="183.0" y="10.3" width="4.5" height="3.72" fill="rgb(211,211,211)"/><rect x="187.5" y="3.0" width="4.5" height="3.72" fill="rgb(203,203,203)"/><rect x="187.5" y="6.7" width="4.5" height="3.72" fill="rgb(118,118,118)"/><rect x="187.5" y="10.3" width="4.5" height="3.72" fill="rgb(200,200,200)"/><rect x="192.0" y="3.0" width="4.5" height="3.72" fill="rgb(204,204,204)"/><rect x="192.0" y="6.7" width="4.5" height="3.72" fill="rgb(165,165,165)"/><rect x="192.0" y="10.3" width="4.5" height="3.72" fill="rgb(213,213,213)"/><rect x="196.5" y="3.0" width="4.5" height="3.72" fill="rgb(222,222,222)"/><rect x="196.5" y="6.7" width="4.5" height="3.72" fill="rgb(186,186,186)"/><rect x="196.5" y="10.3" width="4.5" height="3.72" fill="rgb(166,166,166)"/><rect x="201.0" y="3.0" width="4.5" height="3.72" fill="rgb(186,186,186)"/><rect x="201.0" y="6.7" width="4.5" height="3.72" fill="rgb(210,210,210)"/><rect x="201.0" y="10.3" width="4.5" height="3.72" fill="rgb(187,187,187)"/><rect x="205.5" y="3.0" width="1.1" height="3.72" fill="rgb(176,176,176)"/><rect x="205.5" y="6.7" width="1.1" height="3.72" fill="rgb(210,210,210)"/><rect x="205.5" y="10.3" width="1.1" height="3.72" fill="rgb(194,194,194)"/></g></svg>
<div class="t" style="left:766px;top:145.48px;font-size:11.6px;line-height:11.6px;color:#111;font-weight:700;">- SYN/ACK Packets (SYN ACK Ratio)</div>
<div class="t" style="left:561.5px;top:315.46px;font-size:11.62px;line-height:11.62px;color:#222;font-weight:400;"><span style="color:#3a3aac">Blue</span>: Current value</div>
<div class="t" style="left:561.5px;top:329.26px;font-size:11.62px;line-height:11.62px;color:#222;font-weight:400;"><span style="color:#8c8ce0">Light blue</span>: Same timeframe 1 week ago</div>
<div class="t" style="left:561.5px;top:343.16px;font-size:11.62px;line-height:11.62px;color:#222;font-weight:400;"><span style="color:#b6baec">Lighter blue</span>: Same timeframe 4 weeks ago</div>
<div class="t" style="left:561.5px;top:357.06px;font-size:11.62px;line-height:11.62px;color:#222;font-weight:400;"><span style="color:#bdbdbd">Gray shaded area</span>: Model corridor (if applicable)</div>
<div class="t" style="left:561.5px;top:371.06px;font-size:11.62px;line-height:11.62px;color:#222;font-weight:400;"><span style="color:#dd3ccc">Pink</span>: Model prediction (if applicable)</div>
<svg style="position:absolute;left:0;top:0;will-change:transform" width="1024" height="616">
<line x1="604.5" y1="161" x2="604.5" y2="285" stroke="#e2e2e2" stroke-width="1"/>
<line x1="660.8" y1="161" x2="660.8" y2="285" stroke="#e2e2e2" stroke-width="1"/>
<line x1="717.1" y1="161" x2="717.1" y2="285" stroke="#e2e2e2" stroke-width="1"/>
<line x1="773.4" y1="161" x2="773.4" y2="285" stroke="#e2e2e2" stroke-width="1"/>
<line x1="829.7" y1="161" x2="829.7" y2="285" stroke="#e2e2e2" stroke-width="1"/>
<line x1="886.0" y1="161" x2="886.0" y2="285" stroke="#e2e2e2" stroke-width="1"/>
<line x1="616.3" y1="161" x2="616.3" y2="285" stroke="#ecc8c8" stroke-width="1"/>
<line x1="857.9" y1="161" x2="857.9" y2="285" stroke="#ecc8c8" stroke-width="1"/>
<rect x="565" y="207.2" width="343" height="0.8" fill="#b0b0b0"/>
<rect x="565" y="208" width="343" height="2" fill="#757575"/>
<rect x="565" y="210" width="343" height="2" fill="#7e7e7e"/>
<rect x="565" y="212" width="343" height="1" fill="#a0a0a0"/>
<rect x="565" y="213" width="343" height="3" fill="#cacbca"/>
<rect x="565" y="216" width="343" height="2" fill="#cdcdcd"/>
<rect x="565" y="218" width="343" height="2" fill="#cfcfd6"/>
<rect x="565" y="220" width="343" height="4" fill="#d3d3d3"/>
<rect x="565" y="224" width="343" height="1" fill="#a8a8a8"/>
<rect x="565" y="225" width="343" height="4" fill="#7c7c7c"/>
<rect x="565" y="229" width="343" height="1" fill="#a4a4a4"/>
<polyline fill="none" stroke="#c8c8e8" stroke-width="1.8" points="565,218.8 620,219.0 700,218.8 780,219.1 840,218.8 908,218.9"/>
<polyline fill="none" stroke="#aaaadc" stroke-width="1.5" points="565,217.2 605,217.3 612,217.6 625.5,218.6 640,217.6 660,217.3 700,217 760,217.3 790,217.6 820,217.2 850,216.8 908,216.8"/>
<polyline fill="none" stroke="#4840b8" stroke-width="1.35" stroke-linejoin="round" points="565,216.2 575.7,216.9 581.6,216.6 587.4,217.6 593.3,216.3 600.3,216.2 606.2,216.9 609.7,216.2 616.1,211.4 624,210.8 648,209.6 655.5,210.1 660.7,198.2 672.5,199.5 678.3,201.8 683.2,201.4 690,196.5 698.8,197.5 705.7,200.8 711.5,198.5 723.2,198.7 728.6,195.5 735,196.9 743.8,197.7 752.7,199.5 759.5,198.5 767.8,195.3 776.1,200.1 784,204.3 790.8,197.2 795.7,196.5 801.5,198.5 807.4,197.2 812.3,194.3 818.1,200.1 823.5,216.25 829.8,215.8 839.8,216.7 851.5,215.5 857.8,208 863.7,216.7 872,216.25 879.8,218.2 885.7,214.8 891.5,215.8 897.4,215.5 908,216.25"/>
<rect x="565.5" y="161.5" width="343" height="124" fill="none" stroke="#a8a8a8" stroke-width="1.4"/>
<text x="604.8" y="300.5" font-family="Liberation Sans" font-size="10" fill="#666" text-anchor="middle">04:20</text>
<text x="661" y="300.5" font-family="Liberation Sans" font-size="10" fill="#666" text-anchor="middle">04:30</text>
<text x="717.2" y="300.5" font-family="Liberation Sans" font-size="10" fill="#666" text-anchor="middle">04:40</text>
<text x="773.5" y="300.5" font-family="Liberation Sans" font-size="10" fill="#666" text-anchor="middle">04:50</text>
<text x="829.7" y="300.5" font-family="Liberation Sans" font-size="10" fill="#666" text-anchor="middle">05:00</text>
<text x="886" y="300.5" font-family="Liberation Sans" font-size="10" fill="#666" text-anchor="middle">05:10</text>
<text x="914.5" y="164.5" font-family="Liberation Sans" font-size="10" fill="#666">0.1</text>
<text x="914.5" y="227.4" font-family="Liberation Sans" font-size="10" fill="#666">0.0</text>
<text x="914.5" y="289" font-family="Liberation Sans" font-size="10" fill="#666">-0.1</text>
</svg>
</body></html>
